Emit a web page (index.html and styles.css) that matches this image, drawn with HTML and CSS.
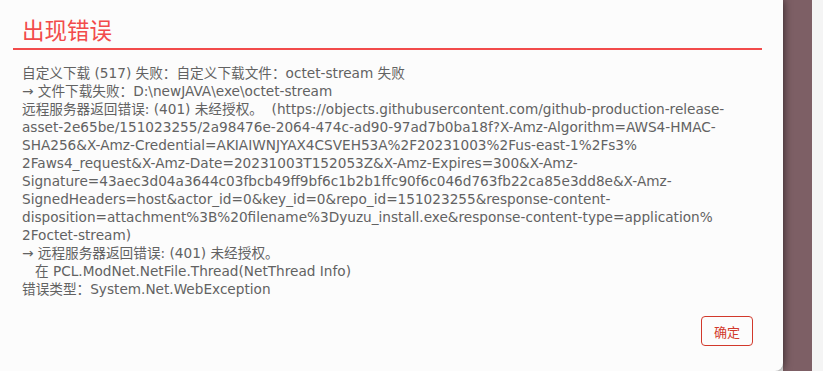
FILE: index.html
```html
<!DOCTYPE html>
<html lang="zh-CN">
<head>
<meta charset="utf-8">
<link rel="stylesheet" href="styles.css">
</head>
<body>
<div class="screen">
  <div class="dialog">
    <div class="title">出现错误</div>
    <div class="rule"></div>
    <div class="message">
      <div class="line">自定义下载 (517) 失败：自定义下载文件：octet-stream 失败</div>
      <div class="line">→ 文件下载失败：D:\newJAVA\exe\octet-stream</div>
      <div class="line">远程服务器返回错误: (401) 未经授权。  (https://objects.githubusercontent.com/github-production-release-</div>
      <div class="line">asset-2e65be/151023255/2a98476e-2064-474c-ad90-97ad7b0ba18f?X-Amz-Algorithm=AWS4-HMAC-</div>
      <div class="line">SHA256&amp;X-Amz-Credential=AKIAIWNJYAX4CSVEH53A%2F20231003%2Fus-east-1%2Fs3%</div>
      <div class="line">2Faws4_request&amp;X-Amz-Date=20231003T152053Z&amp;X-Amz-Expires=300&amp;X-Amz-</div>
      <div class="line">Signature=43aec3d04a3644c03fbcb49ff9bf6c1b2b1ffc90f6c046d763fb22ca85e3dd8e&amp;X-Amz-</div>
      <div class="line">SignedHeaders=host&amp;actor_id=0&amp;key_id=0&amp;repo_id=151023255&amp;response-content-</div>
      <div class="line">disposition=attachment%3B%20filename%3Dyuzu_install.exe&amp;response-content-type=application%</div>
      <div class="line">2Foctet-stream)</div>
      <div class="line">→ 远程服务器返回错误: (401) 未经授权。</div>
      <div class="line">   在 PCL.ModNet.NetFile.Thread(NetThread Info)</div>
      <div class="line">错误类型：System.Net.WebException</div>
    </div>
    <div class="actions">
      <button class="btn">确定</button>
    </div>
  </div>
  <div class="backdrop"></div>
  <div class="strip"></div>
</div>
</body>
</html>
```
FILE: styles.css
```css
html, body {
  margin: 0;
  padding: 0;
  width: 823px;
  height: 371px;
  overflow: hidden;
  background: #f4f4f4;
  font-family: "Noto Sans CJK SC", "Noto Sans", sans-serif;
}
.screen {
  display: flex;
  width: 823px;
  height: 371px;
}
.dialog {
  position: relative;
  z-index: 2;
  width: 783px;
  height: 371px;
  flex: none;
  box-sizing: border-box;
  background: #fcfcfc;
  border-bottom-right-radius: 8px;
  box-shadow: 0 0 10px rgba(0, 0, 0, 0.65);
  padding: 14px 21px 0 13px;
  display: flex;
  flex-direction: column;
}
.title {
  padding-left: 9px;
  font-size: 22.5px;
  line-height: 30px;
  color: #f24b4b;
}
.rule {
  margin-top: 4px;
  height: 2px;
  background: #f24b4b;
}
.message {
  margin-top: 14px;
  padding-left: 9px;
  font-family: "DejaVu Sans", "Noto Sans CJK SC", sans-serif;
  font-size: 13.65px;
  line-height: 18px;
  color: #626262;
}
.line {
  white-space: pre;
}
.actions {
  display: flex;
  justify-content: flex-end;
  margin-top: 18px;
  padding-right: 9px;
}
.btn {
  width: 52px;
  height: 30px;
  box-sizing: border-box;
  border: 1px solid #d2392b;
  border-radius: 4px;
  background: #fcfcfc;
  color: #d2392b;
  font-family: "Noto Sans CJK SC", sans-serif;
  font-size: 13px;
  padding: 0;
}
.backdrop {
  width: 29px;
  flex: none;
  background: #7d5f65;
}
.strip {
  flex: 1;
  background: #f4f4f4;
}
```
